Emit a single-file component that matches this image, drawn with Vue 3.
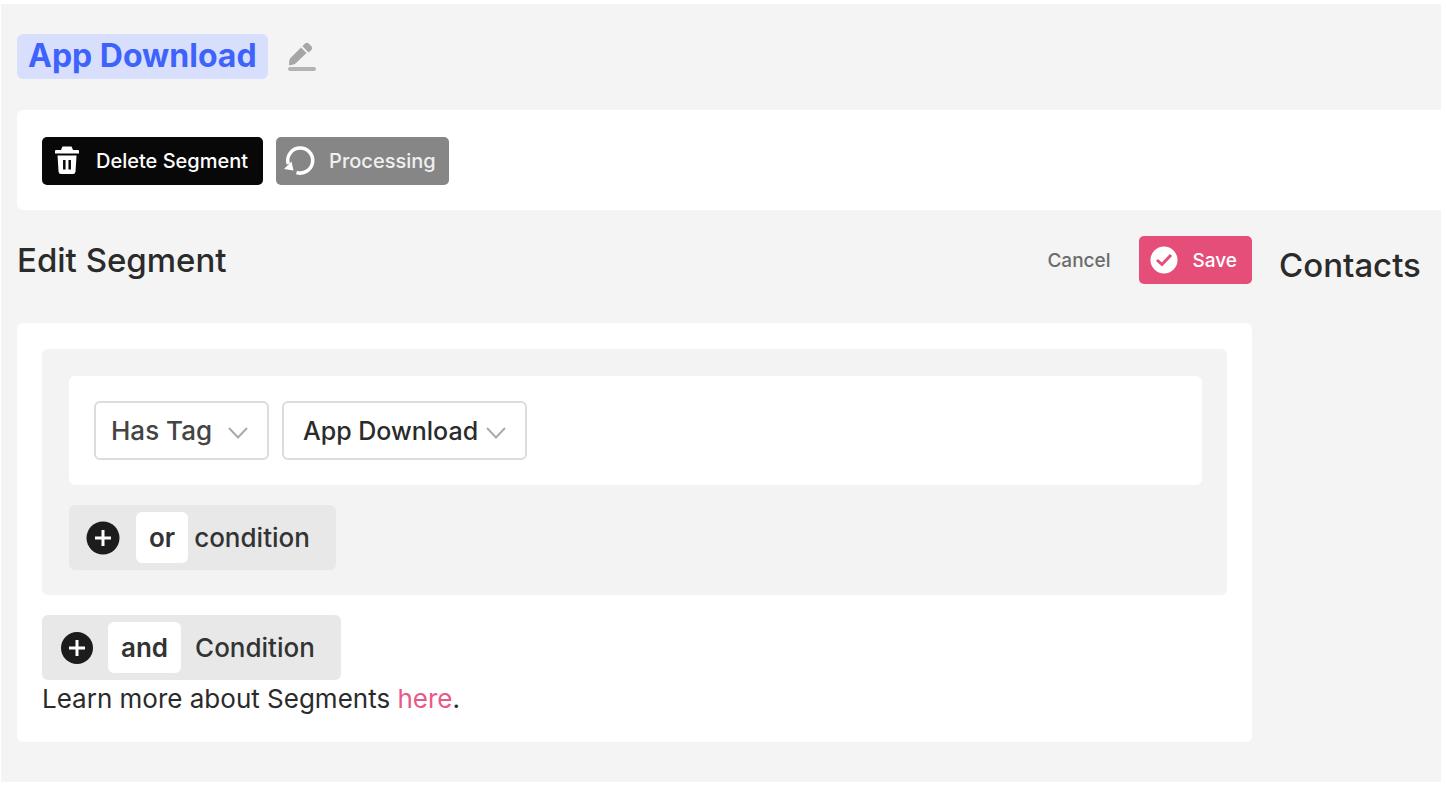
<template>
  <div class="page">
    <header class="title-row">
      <h1 class="segment-name">{{ segmentName }}</h1>
      <button type="button" class="icon-button" aria-label="Rename segment">
        <svg width="28" height="31" viewBox="0 0 28 31" fill="#a6a6a6">
          <path d="M2 17.500 L13 6.600 L18.500 12 L8 22 Q6 24 1 24.300 Q0.800 20 2 17.500 Z" />
          <path d="M14.500 5.200 L17 2.600 Q19 1 20.700 2.600 L23.600 5.400 Q25 7.400 23.400 9 L20.600 11.400 Z" />
          <rect x="0" y="26" width="28" height="4" rx="2" fill="#b3b3b3" />
        </svg>
      </button>
    </header>

    <div class="toolbar">
      <button type="button" class="btn btn-dark">
        <svg width="26" height="30" viewBox="0 0 26 30">
          <path fill="#fff" d="M8 1.500 Q8 0.500 9 0.500 H17 Q18 0.500 18 1.500 L19 4 H24 Q25 4 25 5 V7.500 H1 V5 Q1 4 2 4 H7 Z" />
          <path fill="#fff" d="M3.500 9.500 H22.500 L21.500 25.500 Q21.300 28 19 28 H7 Q4.700 28 4.500 25.500 Z" />
          <path stroke="#080808" stroke-width="2.500" d="M10.300 14 V23.500 M15.700 14 V23.500" />
        </svg>
        <span>Delete Segment</span>
      </button>
      <button type="button" class="btn btn-processing" disabled>
        <svg width="32" height="32" viewBox="0 0 32 32">
          <path d="M4.200 19 A12.500 12.500 0 1 1 12.500 27.500" fill="none" stroke="#fff" stroke-width="3.500" />
          <path d="M0 24 L7.500 16.500 L9.500 25.500 Z" fill="#fff" />
        </svg>
        <span>Processing</span>
      </button>
    </div>

    <main class="columns">
      <section class="editor">
        <div class="editor-head">
          <h2 class="heading">Edit Segment</h2>
          <div class="actions">
            <button type="button" class="btn btn-text">Cancel</button>
            <button type="button" class="btn btn-save">
              <svg width="28" height="28" viewBox="0 0 28 28">
                <circle cx="14" cy="14" r="13.500" fill="#fff" />
                <path d="M7 14 L12 18.500 L21 9" fill="none" stroke="#e64e7a" stroke-width="3" />
              </svg>
              <span>Save</span>
            </button>
          </div>
        </div>

        <div class="card">
          <div class="group">
            <div class="condition">
              <div v-for="field in fields" :key="field.id" class="select-box" :class="field.id">
                <select v-model="field.value" :aria-label="field.label">
                  <option>{{ field.value }}</option>
                </select>
                <svg class="chevron" width="20" height="12" viewBox="0 0 20 12">
                  <path d="M1 1 L10 10.500 L19 1" fill="none" stroke="#aaa" stroke-width="2" />
                </svg>
              </div>
            </div>
            <button type="button" class="add add-or">
              <svg width="34" height="34" viewBox="0 0 34 34">
                <circle cx="17" cy="17" r="16.500" fill="#1c1c1c" />
                <path d="M17 9 V25 M9 17 H25" stroke="#fff" stroke-width="3" />
              </svg>
              <span class="operator">or</span>
              <span>condition</span>
            </button>
          </div>
          <button type="button" class="add add-and">
            <svg width="34" height="34" viewBox="0 0 34 34">
              <circle cx="17" cy="17" r="16" fill="#1c1c1c" />
              <path d="M17 9 V25 M9 17 H25" stroke="#fff" stroke-width="3" />
            </svg>
            <span class="operator">and</span>
            <span>Condition</span>
          </button>
          <p class="learn">Learn more about Segments <a href="#">here</a>.</p>
        </div>
      </section>

      <aside class="contacts">
        <h2 class="heading">Contacts</h2>
      </aside>
    </main>
  </div>
</template>

<script setup>
import { ref } from 'vue'

const segmentName = ref('App Download')

const fields = ref([
  { id: 'rule', label: 'Condition type', value: 'Has Tag' },
  { id: 'tag', label: 'Tag', value: 'App Download' }
])
</script>

<style>
body {
  background: #fff;
}
</style>

<style scoped>
.page {
  margin: 4px 5px 6px 1px;
  padding: 30px 0 40px 16px;
  background: #f4f4f4;
  color: #2b2b2b;
  font-family: 'Inter', sans-serif;
  box-sizing: border-box;
}

button {
  font-family: inherit;
  border: none;
  cursor: pointer;
}

svg {
  display: block;
  flex: none;
}

.title-row {
  display: flex;
  align-items: center;
  gap: 20px;
}

.segment-name {
  margin: 0;
  padding: 0 11px 2px;
  border-radius: 6px;
  background: #d8dffd;
  color: #3e63fb;
  font-size: 32px;
  line-height: 43px;
  font-weight: 700;
}

.icon-button {
  padding: 0;
  background: none;
}

.toolbar {
  display: flex;
  gap: 13px;
  margin-top: 31px;
  padding: 27px 25px 25px;
  border-radius: 6px 0 0 6px;
  background: #fff;
}

.btn {
  display: flex;
  align-items: center;
  height: 48px;
  border-radius: 5px;
  color: #fff;
  font-size: 20px;
  font-weight: 500;
}

.btn-dark {
  gap: 16px;
  padding: 0 15px 0 12px;
  background: #080808;
}

.btn-processing {
  gap: 13px;
  padding: 0 13px 0 8px;
  background: #868686;
  color: #f0f0f0;
}

.btn-text {
  padding: 0;
  background: none;
  color: #6b6b6b;
  font-size: 19px;
}

.btn-save {
  gap: 15px;
  padding: 0 15px 0 11px;
  background: #e64e7a;
  font-size: 19px;
}

.columns {
  display: grid;
  grid-template-columns: 1fr 162px;
  gap: 27px;
  margin-top: 26px;
}

.editor-head {
  display: flex;
  align-items: center;
  justify-content: space-between;
}

.actions {
  display: flex;
  gap: 28px;
}

.heading {
  margin: 0;
  font-size: 33px;
  line-height: 48px;
  font-weight: 500;
}

.contacts {
  padding-top: 5px;
}

.card {
  margin-top: 39px;
  padding: 26px 25px 24px;
  border-radius: 6px;
  background: #fff;
}

.group {
  padding: 27px 25px 25px 27px;
  border-radius: 6px;
  background: #f3f3f3;
}

.condition {
  display: flex;
  gap: 13px;
  padding: 25px;
  border-radius: 6px;
  background: #fff;
}

.select-box {
  display: grid;
  align-items: center;
}

.select-box > * {
  grid-area: 1 / 1;
}

.select-box select {
  appearance: none;
  height: 59px;
  padding: 0 54px 0 15px;
  border: 2px solid #dcdcdc;
  border-radius: 6px;
  background: #fff;
  color: #444;
  font-family: inherit;
  font-size: 26px;
  font-weight: 500;
}

.tag select {
  padding: 0 46px 0 19px;
  color: #2b2b2b;
  font-size: 25px;
}

.chevron {
  justify-self: end;
  margin-top: 4px;
  margin-right: 21px;
  pointer-events: none;
}

.add {
  display: flex;
  align-items: center;
  height: 65px;
  margin-top: 20px;
  border-radius: 6px;
  background: #e8e8e8;
  color: #333;
  font-size: 26px;
  font-weight: 500;
}

.add-or {
  gap: 6px;
  padding: 0 26px 0 17px;
}

.add-and {
  gap: 14px;
  padding: 0 26px 0 18px;
}

.operator {
  padding: 0 13px;
  border-radius: 6px;
  background: #fff;
  line-height: 51px;
  font-weight: 600;
}

.add-or .operator {
  margin-left: 10px;
}

.learn {
  margin: 0;
  font-size: 26px;
  line-height: 38px;
}

.learn a {
  color: #e8598a;
  text-decoration: none;
}
</style>
